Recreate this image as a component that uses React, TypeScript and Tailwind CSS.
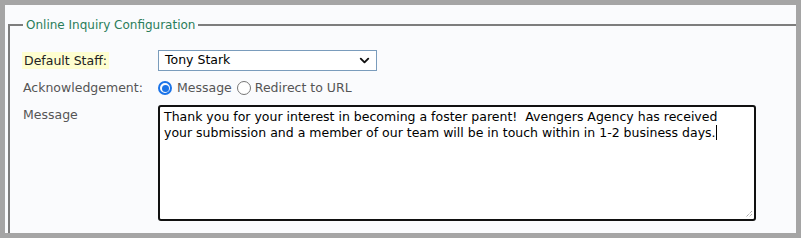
import { ChevronDown } from 'lucide-react'

export default function App() {
  const font = { fontFamily: '"DejaVu Sans", Verdana, sans-serif' }

  return (
    <div className="w-[801px] h-[238px] bg-[#a5a5a5] pt-[5px] pl-[5px] pr-[5px] pb-[5px]" style={font}>
      <div className="h-full bg-[#fafbfd] overflow-hidden pl-[3px] pt-[12px]">
        <fieldset className="h-[300px] border-t-2 border-l-2 border-[#7d7d7d] pl-[12px] pr-0">
          <legend className="ml-[1px] px-[3px] text-[12px] text-[#2a7d5a] leading-[16px]">
            Online Inquiry Configuration
          </legend>

          <div className="mt-[17px] flex items-center h-[21px]">
            <div className="w-[136px] flex">
              <span className="bg-[#fefed0] text-[12.5px] text-[#222] px-[2px] py-[1px] leading-[15px]">
                Default Staff:
              </span>
            </div>
            <div className="w-[219px] h-[21px] border border-[#7a9cbc] bg-white flex items-center justify-between pl-[6px] pr-[4px]">
              <span className="text-[12.5px] text-black">Tony Stark</span>
              <ChevronDown size={15} strokeWidth={3} className="text-[#111]" />
            </div>
          </div>

          <div className="mt-[7px] flex items-center h-[20px] text-[12.5px]">
            <div className="w-[136px] pl-[1px] text-[#555]">Acknowledgement:</div>
            <label className="flex items-center text-[#555]">
              <span className="w-[14px] h-[14px] rounded-full border-2 border-[#1a73e8] flex items-center justify-center">
                <span className="w-[7px] h-[7px] rounded-full bg-[#1a73e8]" />
              </span>
              <span className="ml-[5px]">Message</span>
            </label>
            <label className="flex items-center text-[#555] ml-[5px]">
              <span className="w-[14px] h-[14px] rounded-full border border-[#767676] bg-white" />
              <span className="ml-[4px]">Redirect to URL</span>
            </label>
          </div>

          <div className="mt-[7px] flex items-start text-[12.5px]">
            <div className="w-[136px] pl-[1px] text-[#555] pt-[1px]">Message</div>
            <div className="relative w-[598px] h-[116px] border-2 border-[#111] rounded-[3px] bg-white pl-[4px] pr-[26px] pt-[2px] leading-[16px] text-black">
              Thank you for your interest in becoming a foster parent!&nbsp; Avengers Agency has received your submission and a member of our team will be in touch within in 1-2 business days.<span className="inline-block w-px h-[15px] bg-black align-middle -mt-[3px]" />
              <svg className="absolute right-[1px] bottom-[1px]" width="9" height="9" viewBox="0 0 9 9">
                <path d="M8 2 L2 8 M8 5 L5 8" stroke="#888" strokeWidth="1" strokeDasharray="1 1" />
              </svg>
            </div>
          </div>
        </fieldset>
      </div>
    </div>
  )
}
